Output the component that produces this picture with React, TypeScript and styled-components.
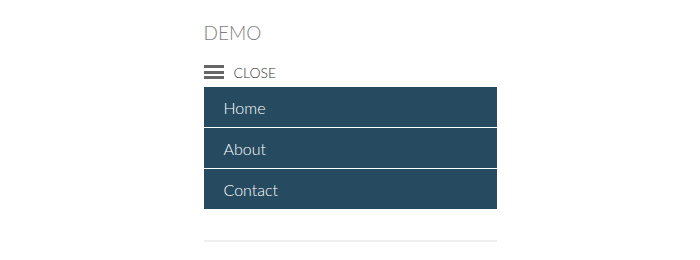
import React from "react";
import styled, { createGlobalStyle } from "styled-components";

const Global = createGlobalStyle`
  html, body { margin: 0; padding: 0; background: #fff; }
  body { font-family: Lato, "Open Sans", sans-serif; }
`;

const Page = styled.div`
  width: 293px;
  margin: 0 auto;
  padding-top: 22px;
`;

const Title = styled.h1`
  margin: 0;
  font-family: "Lato Light", Lato, sans-serif;
  font-size: 19px;
  font-weight: 300;
  color: #7e7e7e;
  line-height: 22px;
`;

const Toggle = styled.button`
  display: flex;
  align-items: center;
  gap: 10px;
  margin-top: 17px;
  padding: 0;
  border: 0;
  background: none;
  font-family: "Lato Light", Lato, sans-serif;
  font-size: 14px;
  font-weight: 300;
  color: #333;
  height: 22px;
  cursor: pointer;
`;

const Burger = styled.span`
  display: flex;
  flex-direction: column;
  justify-content: space-between;
  width: 20px;
  height: 14px;
  & > i {
    display: block;
    height: 3px;
    background: #666;
  }
`;

const Menu = styled.ul`
  list-style: none;
  margin: 4px 0 0;
  padding: 0;
  background: #fff;
`;

const Item = styled.li<{ $last?: boolean }>`
  background: #264a60;
  height: 40px;
  display: flex;
  align-items: center;
  padding-left: 20px;
  color: #ffffff;
  font-family: "Lato Light", Lato, sans-serif;
  font-size: 16px;
  font-weight: 300;
  border-bottom: ${(p) => (p.$last ? "none" : "1px solid #fff")};
`;

const Rule = styled.hr`
  margin: 31px 0 0;
  border: 0;
  border-top: 2px solid #efefef;
`;

export default function App() {
  const items = ["Home", "About", "Contact"];
  return (
    <>
      <Global />
      <Page>
        <Title>DEMO</Title>
        <Toggle>
          <Burger>
            <i />
            <i />
            <i />
          </Burger>
          CLOSE
        </Toggle>
        <Menu>
          {items.map((t, i) => (
            <Item key={t} $last={i === items.length - 1}>
              {t}
            </Item>
          ))}
        </Menu>
        <Rule />
      </Page>
    </>
  );
}
